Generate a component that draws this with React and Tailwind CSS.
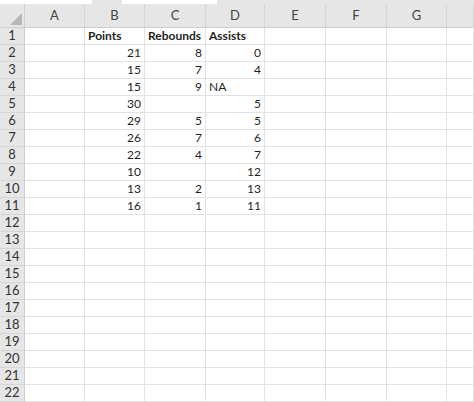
const cols = ["A", "B", "C", "D", "E", "F", "G", ""];
const widths = ["w-[60px]", "w-[60px]", "w-[61px]", "w-[59px]", "w-[61px]", "w-[61px]", "w-[60px]", "flex-1"];

const rows = [
  [null, { v: "Points", b: true }, { v: "Rebounds", b: true }, { v: "Assists", b: true }],
  [null, { v: "21", n: true }, { v: "8", n: true }, { v: "0", n: true }],
  [null, { v: "15", n: true }, { v: "7", n: true }, { v: "4", n: true }],
  [null, { v: "15", n: true }, { v: "9", n: true }, { v: "NA" }],
  [null, { v: "30", n: true }, null, { v: "5", n: true }],
  [null, { v: "29", n: true }, { v: "5", n: true }, { v: "5", n: true }],
  [null, { v: "26", n: true }, { v: "7", n: true }, { v: "6", n: true }],
  [null, { v: "22", n: true }, { v: "4", n: true }, { v: "7", n: true }],
  [null, { v: "10", n: true }, null, { v: "12", n: true }],
  [null, { v: "13", n: true }, { v: "2", n: true }, { v: "13", n: true }],
  [null, { v: "16", n: true }, { v: "1", n: true }, { v: "11", n: true }],
];

function Cell({ w, cell }) {
  return (
    <div
      className={`${w} h-full shrink-0 border-r border-b border-[#e2e2e2] px-[3px] flex items-center overflow-visible whitespace-nowrap ${
        cell && cell.n ? "justify-end" : "justify-start"
      } ${cell && cell.b ? "font-bold" : ""}`}
    >
      {cell ? cell.v : ""}
    </div>
  );
}

export default function App() {
  const allRows = Array.from({ length: 22 }, (_, i) => rows[i] || []);

  return (
    <div className="w-[474px] h-[402px] overflow-hidden bg-white font-['Lato',sans-serif] text-[12px] text-[#1f1f1f]">
      <div className="flex h-[4px] bg-[#e6e6e6]">
        <div className="w-[92px] bg-white"></div>
        <div className="w-[30px]"></div>
        <div className="w-[95px] bg-white"></div>
      </div>

      <div className="flex h-[24px] bg-[#e6e6e6] border-b border-[#cfcfcf] text-[13px] text-[#444]">
        <div className="relative w-[25px] shrink-0 border-r border-[#cfcfcf]">
          <div className="absolute right-[2px] bottom-[2px] w-0 h-0 border-l-[12px] border-l-transparent border-b-[12px] border-b-[#b8b8b8]"></div>
        </div>
        {cols.map((c, i) => (
          <div
            key={i}
            className={`${widths[i]} shrink-0 flex items-center justify-center border-r border-[#d6d6d6]`}
          >
            {c}
          </div>
        ))}
      </div>

      {allRows.map((r, ri) => (
        <div key={ri} className="flex h-[17px]">
          <div className="w-[25px] shrink-0 h-full bg-[#e6e6e6] border-r border-[#cfcfcf] border-b border-b-[#d6d6d6] flex items-center justify-center text-[13px] text-[#333]">
            {ri + 1}
          </div>
          {widths.map((w, ci) => (
            <Cell key={ci} w={w} cell={r[ci]} />
          ))}
        </div>
      ))}
    </div>
  );
}
